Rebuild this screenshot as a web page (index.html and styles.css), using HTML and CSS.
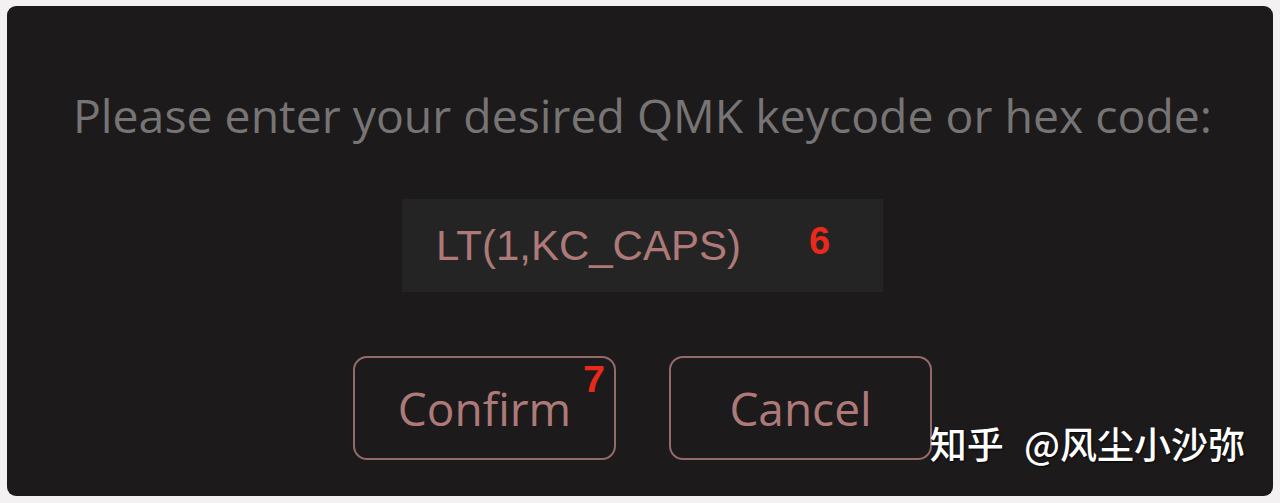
FILE: index.html
```html
<!DOCTYPE html>
<html>
<head>
<meta charset="utf-8">
<link rel="stylesheet" href="styles.css">
</head>
<body>
<div class="panel">
  <h1 class="prompt">Please enter your desired QMK keycode or hex code:</h1>
  <div class="field">
    <span class="code">LT(1,KC_CAPS)</span>
    <span class="mark mark-six">6</span>
  </div>
  <div class="actions">
    <button class="btn">Confirm<span class="mark mark-seven">7</span></button>
    <button class="btn">Cancel</button>
  </div>
  <div class="watermark">知乎 @风尘小沙弥</div>
</div>
</body>
</html>
```
FILE: styles.css
```css
html, body {
  margin: 0;
  padding: 0;
}
body {
  background: #f3f1f1;
  padding: 6px 7px 7px 7px;
  width: 1280px;
  height: 503px;
  box-sizing: border-box;
  overflow: hidden;
}
.panel {
  position: relative;
  height: 490px;
  background: #1c1a1b;
  border-radius: 9px;
  display: flex;
  flex-direction: column;
  align-items: center;
  padding-left: 5px;
  box-sizing: border-box;
}
.prompt {
  margin: 79px 0 0 0;
  font-family: "Open Sans", "Noto Sans", sans-serif;
  font-weight: 400;
  font-size: 46.4px;
  line-height: 60px;
  color: #767474;
  white-space: nowrap;
}
.field {
  margin-top: 54px;
  width: 481px;
  height: 93px;
  background: #252424;
  display: flex;
  align-items: center;
  padding-left: 34px;
  box-sizing: border-box;
}
.code {
  font-family: "Liberation Sans", Arial, sans-serif;
  font-size: 42px;
  color: #ad7a79;
}
.mark {
  font-family: "Liberation Sans", Arial, sans-serif;
  color: #e8291c;
}
.mark-six {
  margin-left: 68px;
  margin-top: -8px;
  font-size: 38px;
  font-weight: 700;
}
.actions {
  margin-top: 64px;
  display: flex;
  gap: 53px;
}
.btn {
  position: relative;
  width: 263px;
  height: 104px;
  background: transparent;
  border: 2px solid #936a6a;
  border-radius: 14px;
  font-family: "Open Sans", "Noto Sans", sans-serif;
  font-size: 46px;
  color: #ad7a79;
  padding: 0;
}
.mark-seven {
  position: absolute;
  top: 1px;
  right: 10px;
  font-size: 36px;
  font-weight: 700;
  transform: scaleX(1.1);
}
.watermark {
  position: absolute;
  right: 28px;
  bottom: 26px;
  font-family: "Noto Sans CJK SC", sans-serif;
  font-size: 37px;
  font-weight: 500;
  word-spacing: 12px;
  color: #ffffff;
  text-shadow: 1px 1px 2px rgba(0,0,0,0.8);
}
```
